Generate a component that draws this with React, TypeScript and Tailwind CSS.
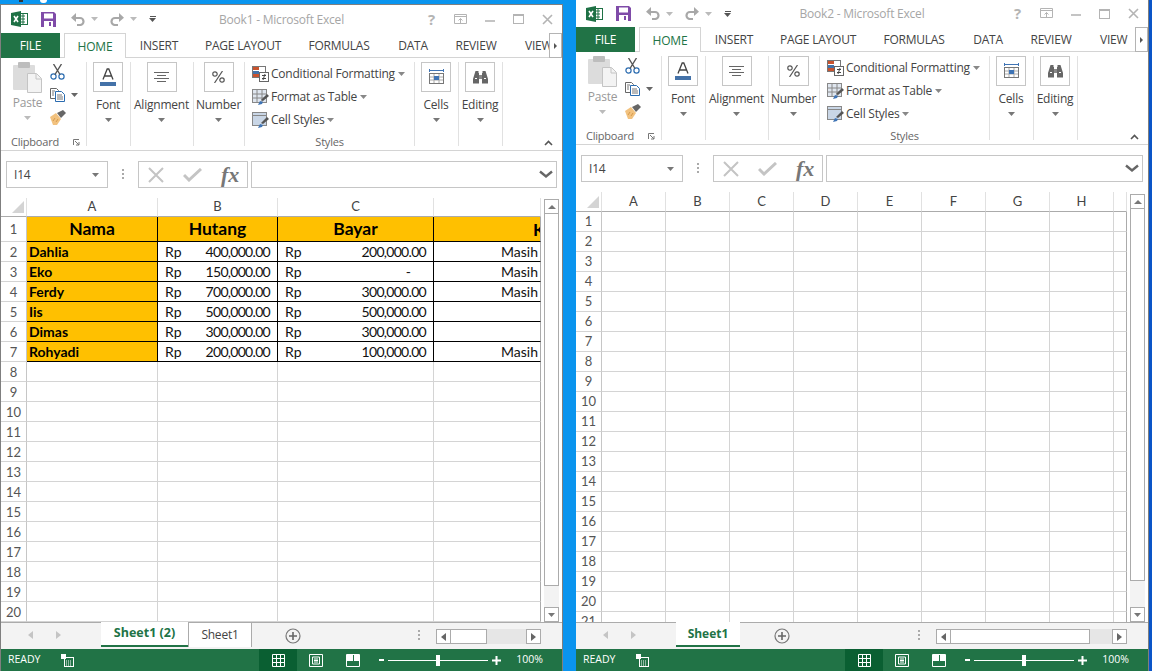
import type { ReactNode } from "react";

const UI = "font-['Open_Sans','Noto_Sans',sans-serif] tracking-[-0.22px]";
const CELL = "font-['Lato','Open_Sans',sans-serif]";

const Caret = ({ color = "#777777" }: { color?: string }) => (
  <svg width="7" height="4" viewBox="0 0 7 4" className="shrink-0">
    <path d="M0 0h7L3.5 4z" fill={color} />
  </svg>
);

const ExcelLogo = () => (
  <svg width="17" height="16" viewBox="0 0 17 16" className="shrink-0">
    <rect x="6.5" y="2.5" width="10" height="11" fill="#fff" stroke="#1e7145" />
    <path d="M10 5h4M10 8h4M10 11h4M12 3v10" stroke="#1e7145" />
    <path d="M0 2 10 0v16L0 14z" fill="#1e7145" />
    <path d="M3 5l4 6M7 5l-4 6" stroke="#fff" strokeWidth="1.6" />
  </svg>
);

const SaveIcon = () => (
  <svg width="15" height="15" viewBox="0 0 15 15" className="shrink-0">
    <path d="M0 0h13l2 2v13H0z" fill="#7f4ba8" />
    <rect x="3" y="1.5" width="9" height="5" fill="#fff" />
    <rect x="3" y="9" width="9" height="6" fill="#fff" />
    <rect x="8" y="10" width="2" height="4" fill="#7f4ba8" />
  </svg>
);

const UndoIcon = ({ flip }: { flip?: boolean }) => (
  <svg width="15" height="13" viewBox="0 0 15 13" className={flip ? "shrink-0 -scale-x-100" : "shrink-0"}>
    <path d="M3 5h7a3.500 3.500 0 0 1 0 7H7" fill="none" stroke="#a8a8a8" strokeWidth="2.2" />
    <path d="M6 0v9L1 4.800z" fill="#a8a8a8" />
  </svg>
);

const PasteIcon = () => (
  <svg width="29" height="31" viewBox="0 0 29 31" className="shrink-0">
    <rect x="0" y="3" width="22" height="25" rx="1" fill="#dcdcdc" />
    <rect x="5" y="0" width="12" height="6" rx="1" fill="#bdbdbd" />
    <path d="M14.500 11.500h9l5 5v14h-14z" fill="#f3f3f3" stroke="#c4c4c4" />
    <path d="M23 12v5h5" fill="none" stroke="#c4c4c4" />
  </svg>
);

const CutIcon = () => (
  <svg width="15" height="16" viewBox="0 0 15 16" className="shrink-0">
    <circle cx="3.500" cy="12.500" r="2.600" fill="none" stroke="#2b6cb0" strokeWidth="1.2" />
    <circle cx="11.500" cy="12.500" r="2.600" fill="none" stroke="#2b6cb0" strokeWidth="1.2" />
    <path d="M5 10.500 11.500 0M10 10.500 3.500 0" stroke="#555" strokeWidth="1.4" />
  </svg>
);

const CopyIcon = () => (
  <svg width="15" height="14" viewBox="0 0 15 14" className="shrink-0">
    <path d="M.5.5h6l2 2v8H.5z" fill="#fff" stroke="#666" />
    <path d="M5.500 3.500h6l3 3v7h-9z" fill="#fff" stroke="#2b6cb0" />
    <path d="M2 3h3M2 5h2M2 7h2M7 7h5M7 9h6M7 11h6" stroke="#777" />
  </svg>
);

const PainterIcon = () => (
  <svg width="17" height="15" viewBox="0 0 17 15" className="shrink-0">
    <path d="M0 7 6 3l5 6-4 6H3z" fill="#f2c27f" />
    <path d="M7 3 13 0l3 3-5 5z" fill="#666" />
    <path d="M3 11l2-3M6 12l2-3" stroke="#d69a4b" />
  </svg>
);

const FontIcon = () => (
  <svg width="16" height="18" viewBox="0 0 16 18">
    <path d="M3 11.500 7.200 1h1.600L13 11.500M4.800 8h6.400" fill="none" stroke="#444" strokeWidth="1.3" />
    <rect x="0" y="14" width="16" height="4" fill="#4472a8" />
  </svg>
);

const AlignIcon = () => (
  <svg width="15" height="11" viewBox="0 0 15 11">
    <path d="M0 .5h15M3 3.500h9M0 6.500h15M3 9.500h9" stroke="#666" />
  </svg>
);

const PercentIcon = () => (
  <svg width="13" height="12" viewBox="0 0 13 12">
    <circle cx="3" cy="3" r="2.200" fill="none" stroke="#555" strokeWidth="1.2" />
    <circle cx="10" cy="9" r="2.200" fill="none" stroke="#555" strokeWidth="1.2" />
    <path d="M10.500 0 2.500 12" stroke="#555" strokeWidth="1.2" />
  </svg>
);

const CondIcon = () => (
  <svg width="17" height="16" viewBox="0 0 17 16" className="shrink-0">
    <rect x=".5" y=".5" width="13" height="11" fill="#fff" stroke="#777" />
    <rect x="1" y="1" width="6" height="3" fill="#c8532e" />
    <rect x="1" y="5" width="6" height="3" fill="#4472a8" />
    <rect x="1" y="8" width="6" height="3" fill="#c8532e" />
    <rect x="7.500" y="6.500" width="9" height="9" fill="#fff" stroke="#666" />
    <path d="M10 9.500h4M10 12.500h4M13 8l-2 6" stroke="#444" />
  </svg>
);

const TableIcon = ({ filled }: { filled?: boolean }) => (
  <svg width="17" height="16" viewBox="0 0 17 16" className="shrink-0">
    <rect x=".5" y=".5" width="14" height="13" fill={filled ? "#c9d6e6" : "#dfe6ef"} stroke="#888" />
    {filled ? (
      <path d="M1 3.500h13" stroke="#888" />
    ) : (
      <path d="M5 1v12M10 1v12M1 5h13M1 9h13" stroke="#888" />
    )}
    <path d="M6 16l2-4 3 1-1 2z" fill="#3f74b5" />
    <path d="M9 11l6-6 2 2-6 5z" fill="#555" />
  </svg>
);

const CellsIcon = () => (
  <svg width="15" height="16" viewBox="0 0 15 16">
    <path d="M1 1.500h13M.5 0v3M14.500 0v3" stroke="#3f74b5" />
    <rect x=".5" y="4.500" width="14" height="10" fill="#fff" stroke="#777" />
    <path d="M5 5v9M10 5v9M1 8h13M1 11h13" stroke="#aaa" />
    <rect x="5" y="7" width="5" height="4" fill="#3f74b5" />
  </svg>
);

const BinocularsIcon = () => (
  <svg width="15" height="14" viewBox="0 0 15 14">
    <path d="M2.500 1h3v2h.5v10.500H0V9z" fill="#666" />
    <path d="M12.500 1h-3v2H9v10.500h6V9z" fill="#666" />
    <rect x="6" y="5" width="3" height="4" fill="#888" />
    <path d="M2 8.500h2M11 8.500h2" stroke="#fff" />
  </svg>
);

const FxIcon = () => (
  <span className="font-['Liberation_Serif',serif] italic font-bold text-[22px] leading-none text-[#777]">fx</span>
);

function BigGroup({ label, width, children }: { label: string; width: string; children: ReactNode }) {
  return (
    <div className={`${width} flex flex-col items-center border-r border-[#e1e1e1] pr-[1px] shrink-0`}>
      <div className="size-[30px] border border-[#c6c6c6] flex items-center justify-center">{children}</div>
      <div className="mt-1 h-[18px] leading-[18px] text-xs text-[#444] whitespace-nowrap">{label}</div>
      <div className="mt-[4px]">
        <Caret />
      </div>
    </div>
  );
}

function StyleRow({ icon, label }: { icon: ReactNode; label: string }) {
  return (
    <div className="h-[23px] flex items-center gap-[2px] text-xs text-[#444] whitespace-nowrap">
      <span className="w-[17px] flex">{icon}</span>
      <span>{label}</span>
      <span className="ml-[1px]">
        <Caret color="#888" />
      </span>
    </div>
  );
}

function Ribbon() {
  return (
    <div className={`h-[93px] shrink-0 border-b border-[#d4d4d4] pt-1 pb-1 flex bg-white ${UI}`}>
      <div className="w-[86px] shrink-0 border-r border-[#e1e1e1] flex flex-col">
        <div className="flex flex-1">
          <div className="w-[49px] flex flex-col items-center pl-[4px]">
            <PasteIcon />
            <div className="text-xs leading-[16px] text-[#999] mt-[2px]">Paste</div>
            <div className="mt-[5px]">
              <Caret color="#bbb" />
            </div>
          </div>
          <div className="flex flex-col gap-[8px] pt-[2px]">
            <CutIcon />
            <div className="flex items-center gap-[6px]">
              <CopyIcon />
              <Caret color="#666" />
            </div>
            <PainterIcon />
          </div>
        </div>
        <div className="h-[8px] leading-[8px] text-[11px] text-[#666] flex items-center pl-[10px] gap-[14px]">
          <span>Clipboard</span>
          <svg width="7" height="7" viewBox="0 0 7 7" className="shrink-0">
            <path d="M.5 6V.5H6M2 2l4 4M6 3v3H3" fill="none" stroke="#777" />
          </svg>
        </div>
      </div>
      <BigGroup label="Font" width="w-[44px]">
        <FontIcon />
      </BigGroup>
      <BigGroup label="Alignment" width="w-[63px]">
        <AlignIcon />
      </BigGroup>
      <BigGroup label="Number" width="w-[51px]">
        <PercentIcon />
      </BigGroup>
      <div className="w-[170px] shrink-0 border-r border-[#e1e1e1] flex flex-col pl-[7px]">
        <div className="flex-1 flex flex-col">
          <StyleRow icon={<CondIcon />} label="Conditional Formatting" />
          <StyleRow icon={<TableIcon />} label="Format as Table" />
          <StyleRow icon={<TableIcon filled />} label="Cell Styles" />
        </div>
        <div className="h-[8px] leading-[8px] text-[11px] text-[#666] text-center pr-[7px]">Styles</div>
      </div>
      <BigGroup label="Cells" width="w-[44px]">
        <CellsIcon />
      </BigGroup>
      <BigGroup label="Editing" width="w-[44px]">
        <BinocularsIcon />
      </BigGroup>
      <div className="flex-1 flex items-end justify-end pr-[9px]">
        <svg width="9" height="6" viewBox="0 0 9 6">
          <path d="M1 5l3.500-3.500L8 5" fill="none" stroke="#555" strokeWidth="1.6" />
        </svg>
      </div>
    </div>
  );
}

function TitleBar({ title, height }: { title: string; height: string }) {
  return (
    <div className={`${height} shrink-0 flex items-center bg-white ${UI}`}>
      <div className="w-[162px] flex items-center pl-[10px] shrink-0">
        <ExcelLogo />
        <span className="ml-[13px] flex shrink-0">
          <SaveIcon />
        </span>
        <span className="ml-[14px] flex shrink-0">
          <UndoIcon />
        </span>
        <span className="ml-[6px] shrink-0">
          <Caret color="#bbb" />
        </span>
        <span className="ml-[12px] flex shrink-0">
          <UndoIcon flip />
        </span>
        <span className="ml-[5px] shrink-0">
          <Caret color="#bbb" />
        </span>
        <span className="ml-[12px] flex flex-col items-center gap-[1px] shrink-0">
          <span className="w-[6px] h-[1px] bg-[#555]" />
          <Caret color="#555" />
        </span>
      </div>
      <div className="flex-1 text-center text-xs text-[#a6a6a6] whitespace-nowrap pt-[1px]">{title}</div>
      <div className="w-[162px] shrink-0 flex justify-end text-[#b4b4b4]">
        <div className="w-[29px] flex justify-center text-[15px] font-bold leading-none">?</div>
        <div className="w-[29px] flex justify-center items-center">
          <svg width="13" height="11" viewBox="0 0 13 11">
            <path d="M.5.5h12v9H.5zM1 2.500h11M6.500 9V4.500M4.500 6.500l2-2 2 2" fill="none" stroke="#b4b4b4" />
          </svg>
        </div>
        <div className="w-[29px] flex justify-center items-center">
          <div className="w-[10px] h-[2px] bg-[#c4c4c4] mt-[3px]" />
        </div>
        <div className="w-[29px] flex justify-center items-center">
          <div className="w-[11px] h-[10px] border border-t-2 border-[#b4b4b4]" />
        </div>
        <div className="w-[29px] flex justify-center items-center">
          <svg width="11" height="11" viewBox="0 0 11 11">
            <path d="M1 1l9 9M10 1l-9 9" stroke="#b4b4b4" strokeWidth="1.6" />
          </svg>
        </div>
      </div>
    </div>
  );
}

function TabRow() {
  const tabs = [
    ["INSERT", "w-[66px]"],
    ["PAGE LAYOUT", "w-[102px]"],
    ["FORMULAS", "w-[90px]"],
    ["DATA", "w-[58px]"],
    ["REVIEW", "w-[68px]"],
  ];
  return (
    <div className={`h-[25px] shrink-0 flex items-stretch text-xs bg-white border-b border-[#d4d4d4] ${UI}`}>
      <div className="w-[59px] -mb-[1px] bg-[#217346] text-white flex items-center justify-center">FILE</div>
      <div className="ml-[4px] w-[62px] -mb-[1px] pt-[1px] bg-white border border-b-0 border-[#d4d4d4] text-[#217346] flex items-center justify-center">
        HOME
      </div>
      {tabs.map(([t, w]) => (
        <div key={t} className={`${w} pt-[1px] text-[#444] flex items-center justify-center`}>
          {t}
        </div>
      ))}
      <div className="flex-1 min-w-0 pl-[15px] pt-[1px] text-[#444] flex items-center overflow-hidden">VIEW</div>
      <div className="w-[13px] shrink-0 -mb-[1px] bg-white border border-[#b4b4b4] flex items-center justify-center">
        <svg width="3" height="6" viewBox="0 0 3 6">
          <path d="M0 0l3 3-3 3z" fill="#555" />
        </svg>
      </div>
    </div>
  );
}

function FormulaBar({ height }: { height: string }) {
  return (
    <div className={`${height} shrink-0 flex items-start gap-[4px] pl-[5px] pr-[5px] pt-[10px] bg-white ${UI}`}>
      <div className="w-[102px] h-[27px] border border-[#c6c6c6] flex items-center justify-between pl-[7px] pr-[8px] text-xs text-[#444] shrink-0">
        <span>I14</span>
        <Caret color="#777" />
      </div>
      <div className="w-[22px] flex flex-col items-center gap-[2px] pt-[8px] shrink-0">
        <span className="size-[2px] bg-[#aaa]" />
        <span className="size-[2px] bg-[#aaa]" />
        <span className="size-[2px] bg-[#aaa]" />
      </div>
      <div className="w-[110px] h-[27px] border border-[#c6c6c6] flex items-center justify-between pl-[9px] pr-[8px] shrink-0">
        <svg width="16" height="16" viewBox="0 0 16 16">
          <path d="M1 1l14 14M15 1 1 15" stroke="#c4c4c4" strokeWidth="2" />
        </svg>
        <svg width="19" height="14" viewBox="0 0 19 14">
          <path d="M1 7l5 5L18 1" fill="none" stroke="#c4c4c4" strokeWidth="3" />
        </svg>
        <FxIcon />
      </div>
      <div className="flex-1 -ml-[1px] h-[27px] border border-[#c6c6c6] flex items-center justify-end pr-[3px]">
        <svg width="14" height="9" viewBox="0 0 14 9">
          <path d="M1 1.500l6 5 6-5" fill="none" stroke="#666" strokeWidth="2.400" />
        </svg>
      </div>
    </div>
  );
}

function VScroll({ pad }: { pad: string }) {
  return (
    <div className={`w-[22px] shrink-0 ${pad} pl-[3px] flex flex-col bg-white`}>
      <div className="w-[15px] flex-1 flex flex-col bg-[#f3f3f3]">
        <div className="h-[15px] bg-white border border-[#ababab] flex items-center justify-center">
          <svg width="8" height="4" viewBox="0 0 8 4">
            <path d="M0 4h8L4 0z" fill="#777" />
          </svg>
        </div>
        <div className="h-[372px] shrink-0 bg-white border-x border-b border-[#ababab]" />
        <div className="flex-1" />
        <div className="h-[15px] bg-white border border-[#ababab] flex items-center justify-center">
          <Caret />
        </div>
      </div>
    </div>
  );
}

function SheetTabs({ children, thumb, track }: { children: ReactNode; thumb: string; track: string }) {
  return (
    <div className={`h-[27px] shrink-0 flex items-start bg-[#f3f3f3] border-t border-[#ababab] ${UI}`}>
      <div className="w-[100px] shrink-0 h-[24px] flex items-center pl-[27px] gap-[23px]">
        <svg width="5" height="8" viewBox="0 0 5 8">
          <path d="M5 0v8L0 4z" fill="#c4c4c4" />
        </svg>
        <svg width="5" height="8" viewBox="0 0 5 8">
          <path d="M0 0v8l5-4z" fill="#c4c4c4" />
        </svg>
      </div>
      {children}
      <div className="flex-1 flex justify-end pt-[6px] pr-[16px]">
        <div className="flex flex-col gap-[2px] pt-[1px]">
          <span className="size-[2px] bg-[#aaa]" />
          <span className="size-[2px] bg-[#aaa]" />
          <span className="size-[2px] bg-[#aaa]" />
        </div>
      </div>
      <div className="mt-[6px] mr-[21px] h-[15px] flex shrink-0 bg-[#e6e6e6]">
        <div className="w-[15px] bg-white border border-[#ababab] flex items-center justify-center">
          <svg width="5" height="8" viewBox="0 0 5 8">
            <path d="M5 0v8L0 4z" fill="#666" />
          </svg>
        </div>
        <div className={`${thumb} bg-white border-y border-r border-[#ababab]`} />
        <div className={track} />
        <div className="w-[15px] bg-white border border-[#ababab] flex items-center justify-center">
          <svg width="5" height="8" viewBox="0 0 5 8">
            <path d="M0 0v8l5-4z" fill="#666" />
          </svg>
        </div>
      </div>
    </div>
  );
}

function PlusCircle() {
  return (
    <svg width="16" height="16" viewBox="0 0 16 16">
      <circle cx="8" cy="8" r="7" fill="none" stroke="#777" strokeWidth="1.2" />
      <path d="M8 4v8M4 8h8" stroke="#666" strokeWidth="1.6" />
    </svg>
  );
}

function StatusBar() {
  return (
    <div className="h-[22px] shrink-0 bg-[#217346] flex items-center text-white font-['Open_Sans','Noto_Sans',sans-serif]">
      <span className="ml-[7px] w-[53px] text-[10.500px]">READY</span>
      <svg width="13" height="13" viewBox="0 0 13 13" className="shrink-0">
        <rect x="3.500" y="3.500" width="9" height="9" fill="none" stroke="#fff" />
        <rect x="0" y="0" width="5" height="5" fill="#fff" />
        <path d="M5 7h6M5 9h6M5 11h6" stroke="#fff" strokeDasharray="1 1" />
      </svg>
      <div className="flex-1" />
      <div className="w-[38px] h-[22px] bg-[#0a5f32] flex items-center justify-center">
        <svg width="13" height="13" viewBox="0 0 13 13">
          <path d="M.5.5h12v12H.5zM4.500 1v12M8.500 1v12M1 4.500h12M1 8.500h12" fill="none" stroke="#fff" />
        </svg>
      </div>
      <div className="w-[37px] flex justify-center">
        <svg width="14" height="13" viewBox="0 0 14 13">
          <path d="M.5.5h13v12H.5zM3.500 3h7v7h-7zM5 5h4M5 6.500h4M5 8h4" fill="none" stroke="#fff" />
        </svg>
      </div>
      <div className="w-[37px] flex justify-center">
        <svg width="14" height="13" viewBox="0 0 14 13">
          <path d="M.5.5h13v12H.5z" fill="none" stroke="#fff" />
          <path d="M1 1h6v6H1zM8 1h5v6H8z" fill="#fff" />
        </svg>
      </div>
      <div className="ml-[8px] flex items-center">
        <span className="w-[5px] h-[2px] bg-white" />
        <div className="relative mx-[4px] w-[100px] h-[1px] bg-white">
          <span className="absolute left-[48px] -top-[5px] w-[4px] h-[11px] bg-white" />
        </div>
        <svg width="9" height="9" viewBox="0 0 9 9" className="shrink-0">
          <path d="M4.500 0v9M0 4.500h9" stroke="#fff" strokeWidth="2" />
        </svg>
      </div>
      <span className="ml-[15px] mr-[19px] text-[10.500px]">100%</span>
    </div>
  );
}

function ColHead({ label }: { label: string }) {
  return (
    <div className="border-r border-b border-r-[#e1e1e1] border-b-[#ababab] flex items-center justify-center text-[13px] text-[#444]">
      {label}
    </div>
  );
}

function Corner() {
  return (
    <div className="border-r border-b border-r-[#e1e1e1] border-b-[#ababab] flex items-end justify-end pr-[2px] pb-[3px]">
      <svg width="12" height="12" viewBox="0 0 12 12">
        <path d="M12 0v12H0z" fill="#d4d4d4" />
      </svg>
    </div>
  );
}

function RowHead({ n, lower }: { n: number; lower?: boolean }) {
  return (
    <div
      className={`${lower ? "pt-[2px]" : ""} border-r border-b border-r-[#c6c6c6] border-b-[#d4d4d4] flex items-center justify-center text-[13px] text-[#555]`}
    >
      {n}
    </div>
  );
}

const BOOK1 = [
  ["Dahlia", "400,000.00", "200,000.00", "Masih"],
  ["Eko", "150,000.00", "-", "Masih"],
  ["Ferdy", "700,000.00", "300,000.00", "Masih"],
  ["Iis", "500,000.00", "500,000.00", ""],
  ["Dimas", "300,000.00", "300,000.00", ""],
  ["Rohyadi", "200,000.00", "100,000.00", "Masih"],
];

const Empty = () => <div className="border-r border-b border-[#d4d4d4]" />;

function Money({ value }: { value: string }) {
  return (
    <div className="border-r border-b border-black flex items-center justify-between pl-[7px] pr-[7px] text-[14px] text-[#111]">
      <span>Rp</span>
      <span className={value === "-" ? "pr-[15px]" : "tracking-[-0.7px]"}>{value}</span>
    </div>
  );
}

function Book1Grid() {
  return (
    <div className={`grid grid-cols-[26px_131px_120px_156px_107px] grid-rows-[19px_25px_repeat(19,20px)] ${CELL}`}>
      <Corner />
      {["A", "B", "C", ""].map((c) => (
        <ColHead key={c} label={c} />
      ))}
      <RowHead n={1} lower />
      {["Nama", "Hutang", "Bayar"].map((h) => (
        <div key={h} className="bg-[#ffc000] pt-[1px] border-r border-b border-black flex items-center justify-center font-bold text-[17.500px] text-black">
          {h}
        </div>
      ))}
      <div className="bg-[#ffc000] pt-[1px] border-r border-r-[#ababab] border-b border-b-black overflow-hidden whitespace-nowrap pl-[99px] font-bold text-[17.500px] leading-[24px] text-black">
        Keterangan
      </div>
      {BOOK1.map((r, i) => (
        <div key={r[0]} className="contents">
          <RowHead n={i + 2} lower />
          <div className="bg-[#ffc000] border-r border-b border-black flex items-center pl-[2px] font-bold text-[14px] text-black">
            {r[0]}
          </div>
          <Money value={r[1]} />
          <Money value={r[2]} />
          <div className="border-r border-r-[#ababab] border-b border-b-black flex items-center justify-end pr-[2px] text-[14px] text-[#111]">
            {r[3]}
          </div>
        </div>
      ))}
      {Array.from({ length: 13 }, (_, i) => (
        <div key={i} className="contents">
          <RowHead n={i + 8} lower />
          <Empty />
          <Empty />
          <Empty />
          <div className="border-r border-r-[#ababab] border-b border-b-[#d4d4d4]" />
        </div>
      ))}
    </div>
  );
}

function Book2Grid() {
  const cols = ["A", "B", "C", "D", "E", "F", "G", "H"];
  return (
    <div className={`grid grid-cols-[26px_repeat(8,64px)_13px] grid-rows-[20px_repeat(21,20px)] ${CELL}`}>
      <Corner />
      {cols.map((c) => (
        <ColHead key={c} label={c} />
      ))}
      <ColHead label="" />
      {Array.from({ length: 21 }, (_, i) => (
        <div key={i} className="contents">
          <RowHead n={i + 1} />
          {cols.map((c) => (
            <Empty key={c} />
          ))}
          <div className="border-r border-r-[#ababab] border-b border-b-[#d4d4d4]" />
        </div>
      ))}
    </div>
  );
}

export default function App() {
  return (
    <div className="relative h-[671px] w-[1152px] overflow-hidden flex items-start bg-gradient-to-r from-[#0a96f0] via-[#0a94ee] via-50% to-[#0a55c8]">
      {/* bits of the desktop above the window */}
      <span className="absolute left-[40px] top-0 w-[7px] h-[3px] rounded-b bg-white" />
      <span className="absolute left-[19px] top-0 w-[4px] h-[2px] bg-[#333]" />

      {/* Book1 */}
      <div className="w-[563px] h-[667px] mt-1 shrink-0 flex flex-col bg-white border-t border-x border-[#7f7f7f]">
        <TitleBar title="Book1 - Microsoft Excel" height="h-[28px]" />
        <TabRow />
        <Ribbon />
        <FormulaBar height="h-[47px]" />
        <div className="flex-1 min-h-0 flex overflow-hidden">
          <Book1Grid />
          <VScroll pad="pt-[1px]" />
        </div>
        <SheetTabs thumb="w-[36px]" track="w-[39px]">
          <div className="w-[87px] h-[25px] -mt-[1px] bg-white border-b-2 border-[#217346] flex items-center justify-center text-[12.500px] tracking-normal font-bold text-[#217346] shrink-0">
            Sheet1 (2)
          </div>
          <div className="w-[64px] h-[24px] bg-white border-x border-[#ababab] flex items-center justify-center text-xs text-[#444] shrink-0">
            Sheet1
          </div>
          <div className="pl-[33px] pt-[5px]">
            <PlusCircle />
          </div>
        </SheetTabs>
        <StatusBar />
      </div>

      {/* Book2 */}
      <div className="ml-[13px] w-[573px] h-[671px] shrink-0 flex flex-col bg-white border-r border-[#7f7f7f]">
        <TitleBar title="Book2 - Microsoft Excel" height="h-[27px]" />
        <TabRow />
        <Ribbon />
        <FormulaBar height="h-[47px]" />
        <div className="flex-1 min-h-0 flex overflow-hidden">
          <Book2Grid />
          <VScroll pad="pt-[2px]" />
        </div>
        <SheetTabs thumb="w-[139px]" track="w-[22px]">
          <div className="w-[64px] h-[25px] -mt-[1px] bg-white border-b-2 border-[#217346] flex items-center justify-center text-xs tracking-normal font-bold text-[#217346] shrink-0">
            Sheet1
          </div>
          <div className="pl-[34px] pt-[5px]">
            <PlusCircle />
          </div>
        </SheetTabs>
        <StatusBar />
      </div>
    </div>
  );
}
